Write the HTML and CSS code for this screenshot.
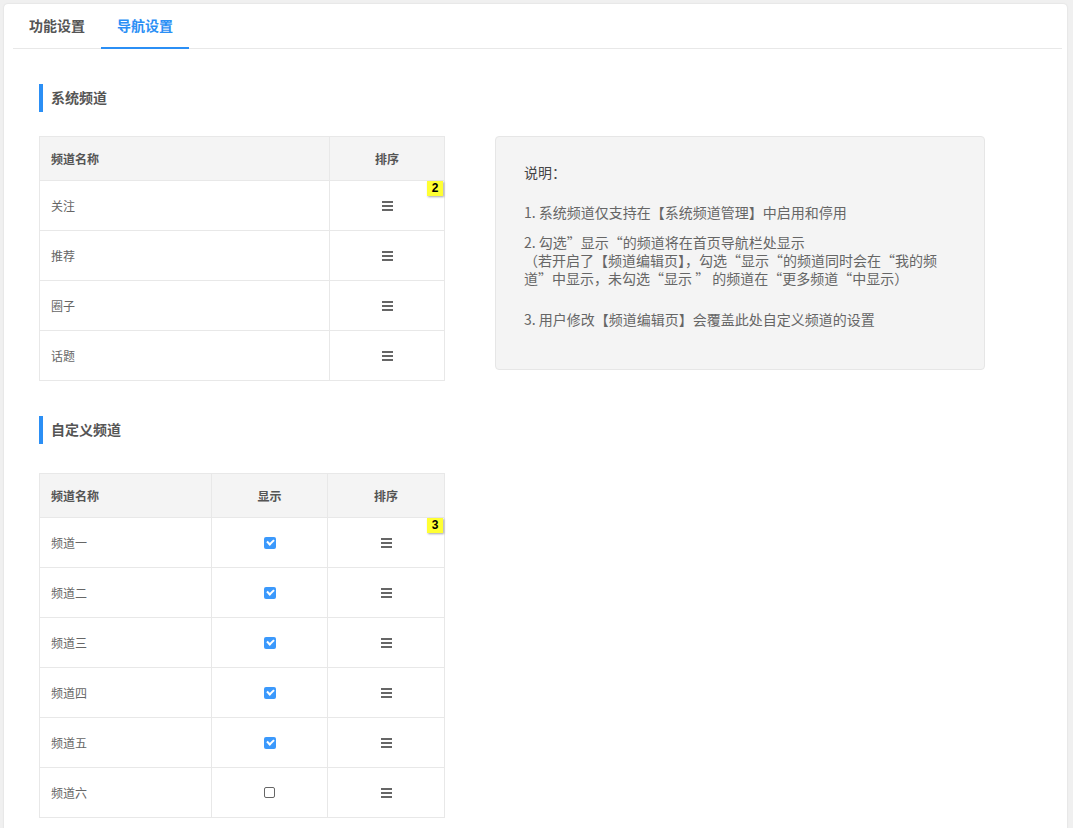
FILE: index.html
```html
<!DOCTYPE html>
<html lang="zh-CN">
<head>
    <meta charset="UTF-8">
    <title>导航设置</title>
    <link rel="stylesheet" href="styles.css">
</head>
<body>
    <div class="card">
        <div class="tabs">
            <div class="tab">功能设置</div>
            <div class="tab active">导航设置</div>
        </div>

        <div class="content">
            <h3 class="section-title">系统频道</h3>
            <div class="section-row">
                <table class="channel-table system">
                    <colgroup>
                        <col class="col-name-wide">
                        <col class="col-sort">
                    </colgroup>
                    <thead>
                        <tr><th class="name">频道名称</th><th>排序</th></tr>
                    </thead>
                    <tbody>
                        <tr>
                            <td class="name">关注</td>
                            <td class="sort"><span class="drag"><i></i><i></i><i></i></span><span class="badge">2</span></td>
                        </tr>
                        <tr><td class="name">推荐</td><td class="sort"><span class="drag"><i></i><i></i><i></i></span></td></tr>
                        <tr><td class="name">圈子</td><td class="sort"><span class="drag"><i></i><i></i><i></i></span></td></tr>
                        <tr><td class="name">话题</td><td class="sort"><span class="drag"><i></i><i></i><i></i></span></td></tr>
                    </tbody>
                </table>

                <div class="notice">
                    <p class="notice-title">说明：</p>
                    <p>1. 系统频道仅支持在【系统频道管理】中启用和停用</p>
                    <p>2. 勾选”显示“的频道将在首页导航栏处显示<br>（若开启了【频道编辑页】，勾选“显示“的频道同时会在“我的频<br>道”中显示，未勾选“显示 ” 的频道在“更多频道“中显示）</p>
                    <p class="last">3. 用户修改【频道编辑页】会覆盖此处自定义频道的设置</p>
                </div>
            </div>

            <h3 class="section-title custom-title">自定义频道</h3>
            <table class="channel-table custom">
                <colgroup>
                    <col class="col-name">
                    <col class="col-show">
                    <col class="col-sort2">
                </colgroup>
                <thead>
                    <tr><th class="name">频道名称</th><th>显示</th><th>排序</th></tr>
                </thead>
                <tbody>
                    <tr>
                        <td class="name">频道一</td>
                        <td><span class="checkbox checked"></span></td>
                        <td class="sort"><span class="drag"><i></i><i></i><i></i></span><span class="badge">3</span></td>
                    </tr>
                    <tr><td class="name">频道二</td><td><span class="checkbox checked"></span></td><td class="sort"><span class="drag"><i></i><i></i><i></i></span></td></tr>
                    <tr><td class="name">频道三</td><td><span class="checkbox checked"></span></td><td class="sort"><span class="drag"><i></i><i></i><i></i></span></td></tr>
                    <tr><td class="name">频道四</td><td><span class="checkbox checked"></span></td><td class="sort"><span class="drag"><i></i><i></i><i></i></span></td></tr>
                    <tr><td class="name">频道五</td><td><span class="checkbox checked"></span></td><td class="sort"><span class="drag"><i></i><i></i><i></i></span></td></tr>
                    <tr><td class="name">频道六</td><td><span class="checkbox"></span></td><td class="sort"><span class="drag"><i></i><i></i><i></i></span></td></tr>
                </tbody>
            </table>
        </div>
    </div>
</body>
</html>
```

FILE: styles.css
```css
* {
    box-sizing: border-box;
    margin: 0;
    padding: 0;
}

body {
    font-family: "Noto Sans CJK SC", "Noto Sans", sans-serif;
    background-color: #f0f0f0;
    color: #666;
}

.card {
    margin: 4px 6px 0 4px;
    padding: 0 5px 60px 9px;
    background-color: #fff;
    border-radius: 4px;
    box-shadow: 0 0 2px rgba(0, 0, 0, 0.12);
}

.tabs {
    display: flex;
    border-bottom: 1px solid #e8e8e8;
}

.tab {
    padding: 0 16px;
    height: 45px;
    line-height: 43px;
    margin-bottom: -1px;
    font-size: 14px;
    font-weight: bold;
    color: #555;
    border-bottom: 2px solid transparent;
    cursor: pointer;
}

.tab.active {
    color: #2b8ff5;
    border-bottom-color: #2b8ff5;
}

.content {
    padding: 35px 0 0 26px;
}

.section-title {
    height: 28px;
    line-height: 27px;
    padding-left: 8px;
    border-left: 4px solid #2b8ff5;
    font-size: 14px;
    font-weight: bold;
    color: #555;
    margin-bottom: 24px;
}

.section-title.custom-title {
    margin-bottom: 29px;
}

.section-row {
    display: flex;
    align-items: flex-start;
    gap: 50px;
    margin-bottom: 35px;
}

.channel-table {
    width: 405px;
    border-collapse: collapse;
    border: 1px solid #e8e8e8;
    table-layout: fixed;
    font-size: 12px;
}

.col-name-wide { width: 290px; }
.col-sort { width: 115px; }
.col-name { width: 172px; }
.col-show { width: 116px; }
.col-sort2 { width: 117px; }

.channel-table th,
.channel-table td {
    border: 1px solid #e8e8e8;
    text-align: center;
    vertical-align: middle;
    padding: 0;
}

.channel-table th {
    height: 44px;
    background-color: #f4f4f4;
    font-weight: bold;
    color: #555;
}

.channel-table td {
    height: 50px;
    color: #666;
}

.channel-table .name {
    text-align: left;
    padding-left: 11px;
}

.sort {
    position: relative;
}

.drag {
    display: flex;
    flex-direction: column;
    gap: 2px;
    width: 11px;
    margin: 0 auto;
}

.drag i {
    display: block;
    height: 2px;
    background-color: #666;
}

.badge {
    position: absolute;
    top: 0;
    right: 1px;
    width: 16px;
    height: 15px;
    line-height: 15px;
    background-color: #ffff33;
    color: #000;
    font-family: "Liberation Sans", Arial, sans-serif;
    font-size: 12px;
    font-weight: bold;
    text-align: center;
    box-shadow: 1px 1px 2px rgba(0, 0, 0, 0.35);
}

.checkbox {
    display: block;
    width: 11px;
    height: 11px;
    margin: 0 auto;
    border: 1px solid #666;
    border-radius: 2px;
    position: relative;
}

.checkbox.checked {
    width: 12px;
    height: 12px;
    border: none;
    background-color: #3b99fc;
}

.checkbox.checked::after {
    content: "";
    position: absolute;
    left: 3px;
    top: 2px;
    width: 5px;
    height: 3px;
    border-left: 2px solid #fff;
    border-bottom: 2px solid #fff;
    transform: rotate(-45deg);
}

.notice {
    width: 490px;
    height: 234px;
    padding: 26px 28px;
    background-color: #f4f4f4;
    border: 1px solid #e6e6e6;
    border-radius: 4px;
    font-size: 14px;
    line-height: 18px;
    color: #666;
    white-space: nowrap;
}

.notice p {
    margin-bottom: 12px;
}

.notice .notice-title {
    color: #444;
    margin-bottom: 22px;
}

.notice p:nth-child(3) {
    margin-bottom: 23px;
}
```
